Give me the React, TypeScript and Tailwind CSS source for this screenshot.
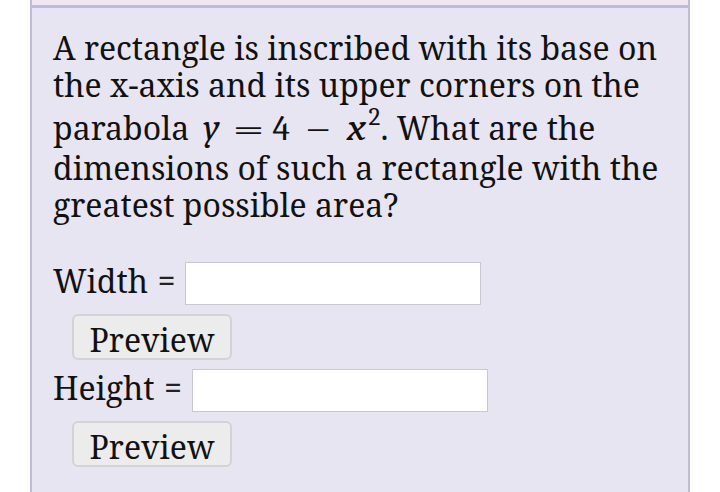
import React from "react";

const serif = { fontFamily: '"Noto Serif", "DejaVu Serif", serif' };

// MathJax-like rendering of y = 4 − x²
function MathExpr() {
  return (
    <span className="font-serif text-[#111] leading-none">
      <span className="inline-block ml-[2px] w-[24px] text-center text-[38px] italic">y</span>
      <span className="inline-block w-[49px] text-center text-[34px]">
        <span className="inline-block scale-x-[1.7]">=</span>
      </span>
      <span className="inline-block w-[17px] text-center text-[35px]">4</span>
      <span className="inline-block ml-[2px] w-[53px] text-center text-[34px]">
        <span className="inline-block scale-x-[1.5]">−</span>
      </span>
      <span className="inline-block w-[24px] text-center text-[38px] italic">
        <span className="inline-block scale-x-[1.15]">x</span>
      </span>
      <span className="inline-block w-[12px] text-center text-[25px] relative -top-[15px]">2</span>
    </span>
  );
}

function Answer({ label }: { label: string }) {
  return (
    <div>
      <div className="flex items-start h-[43px]">
        <span className="text-[32px] leading-[37px] text-[#111]">{label}</span>
        <span className="ml-[10px] mr-[10px] text-[30px] leading-[37px] [font-family:'Noto_Sans',sans-serif] text-[#222]">
          =
        </span>
        <input
          type="text"
          className="h-[43px] w-[296px] bg-white border border-[#c9c8cf] outline-none"
        />
      </div>
      <button className="mt-[9px] ml-[19px] w-[160px] h-[46px] rounded-[6px] bg-[#ececed] border-2 border-[#d3d2d6] text-[32px] text-[#111]">
        Preview
      </button>
    </div>
  );
}

export default function App() {
  return (
    <div className="w-[720px] h-[492px] bg-white overflow-hidden" style={serif}>
      <div className="ml-[30px] w-[660px]">
        {/* previous problem box, bottom edge */}
        <div className="h-[5px] border-x-2 border-[#bebcdc] bg-[#f0e7f2]" />
        {/* BEGIN: question box */}
        <div className="h-[487px] border-x-2 border-t-[3px] border-[#bebcdc] bg-[#e8e5f2] pl-[21px] pt-[21px]">
          <div className="text-[32px] leading-[37px] text-[#111] whitespace-nowrap">
            <div className="h-[37px]">A rectangle is inscribed with its base on</div>
            <div className="h-[37px]">the x-axis and its upper corners on the</div>
            <div className="h-[37px] mt-[6px]">
              parabola <MathExpr />. What are the
            </div>
            <div className="h-[37px] mt-[3px]">dimensions of such a rectangle with the</div>
            <div className="h-[37px]">greatest possible area?</div>
          </div>
          <div className="mt-[39px] flex flex-col gap-[9px]">
            <Answer label="Width" />
            <Answer label="Height" />
          </div>
        </div>
        {/* END: question box */}
      </div>
    </div>
  );
}
